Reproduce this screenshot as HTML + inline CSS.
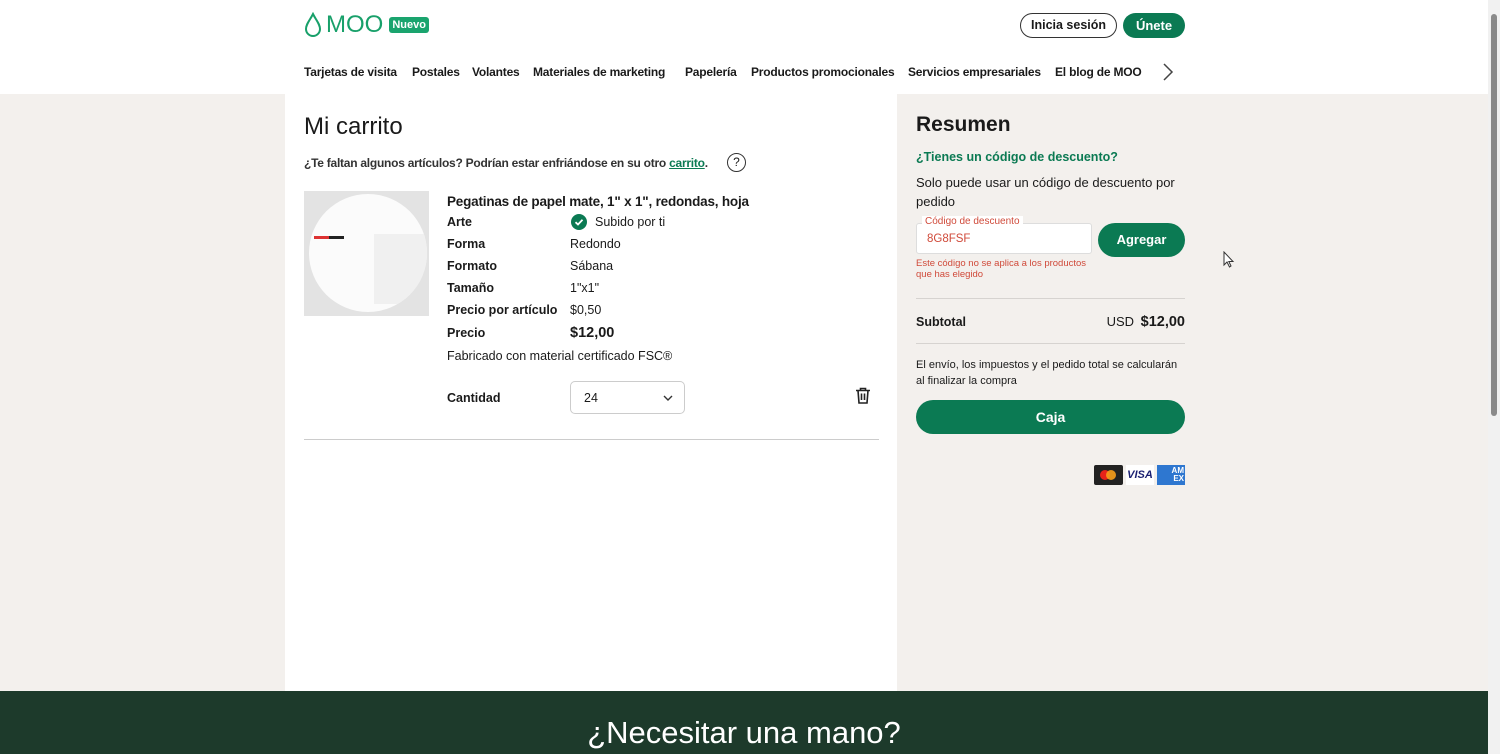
<!DOCTYPE html>
<html><head><meta charset="utf-8"><style>
*{box-sizing:border-box;margin:0;padding:0}
body{width:1500px;height:754px;overflow:hidden;font-family:"Liberation Sans",sans-serif;color:#1a1a1a;background:#f3f0ed;position:relative}
.hdr{position:absolute;left:0;top:0;width:1488px;height:94px;background:#fff}
.logo{position:absolute;left:304px;top:11px;display:flex;align-items:center}
.moo{color:#18a06a;font-size:24px;margin-left:4px}
.badge{background:#1aa46e;color:#fff;font-size:11px;font-weight:bold;padding:2px 3px;border-radius:3px;margin-left:6px}
.btn1{position:absolute;left:1020px;top:13px;width:97px;height:25px;border:1px solid #333;border-radius:13px;font-size:12.5px;font-weight:bold;text-align:center;line-height:23px}
.btn2{position:absolute;left:1123px;top:13px;width:62px;height:25px;background:#0b7a53;color:#fff;border-radius:13px;font-size:13px;font-weight:bold;text-align:center;line-height:25px}
.nav span{position:absolute;top:65px;font-size:12px;font-weight:bold;white-space:nowrap;letter-spacing:-0.2px}
.main{position:absolute;left:285px;top:94px;width:612px;height:597px;background:#fff}
.side{position:absolute;left:897px;top:94px;width:591px;height:597px;background:#f3f0ed}
.sb{position:absolute;left:1488px;top:0;width:12px;height:754px;background:#f1f1f1}
.sb div{position:absolute;left:3px;top:14px;width:6px;height:402px;background:#8a8a8a;border-radius:3px}
.foot{position:absolute;left:0;top:691px;width:1488px;height:63px;background:#1d3a2b;color:#fff;font-size:31px;text-align:center;padding-top:24px}
h1{font-size:24px;font-weight:normal;position:absolute}
.t{position:absolute;font-size:12.5px;white-space:nowrap}
.b{font-weight:bold}
.g{color:#0b7a53}
.lbl{left:447px;font-weight:bold}
.val{left:570px}
</style></head><body>
<div class="hdr">
 <div class="logo"><svg width="18" height="26" viewBox="0 0 18 26"><path d="M9 2 C6 8 2 12 2 17 A7 7 0 0 0 16 17 C16 12 12 8 9 2Z" fill="none" stroke="#18a06a" stroke-width="2"/></svg><span class="moo">MOO</span><span class="badge">Nuevo</span></div>
 <div class="btn1">Inicia sesión</div><div class="btn2">Únete</div>
 <div class="nav"><span style="left:304px">Tarjetas de visita</span><span style="left:412px">Postales</span><span style="left:472px">Volantes</span><span style="left:533px">Materiales de marketing</span><span style="left:685px">Papelería</span><span style="left:751px">Productos promocionales</span><span style="left:908px">Servicios empresariales</span><span style="left:1055px">El blog de MOO</span></div>
 <svg style="position:absolute;left:1162px;top:63px" width="12" height="18" viewBox="0 0 12 18"><path d="M2 1 L10 9 L2 17" fill="none" stroke="#444" stroke-width="1.5"/></svg>
</div>
<div class="main"></div><div class="side"></div>
<h1 style="left:304px;top:113px">Mi carrito</h1>
<div class="t b" style="left:304px;top:156px;color:#333;font-size:12px;letter-spacing:-0.25px">¿Te faltan algunos artículos? Podrían estar enfriándose en su otro <span class="g" style="text-decoration:underline">carrito</span>.</div>
<div style="position:absolute;left:727px;top:153px;width:19px;height:19px;border:1.5px solid #333;border-radius:50%;font-size:12px;text-align:center;line-height:16px">?</div>
<div style="position:absolute;left:304px;top:191px;width:125px;height:125px;background:#e3e3e3"><div style="position:absolute;left:5px;top:3px;width:118px;height:118px;border-radius:50%;background:#fbfbfb;overflow:hidden"><div style="position:absolute;left:5px;top:42px;width:15px;height:3px;background:#d33"></div><div style="position:absolute;left:20px;top:42px;width:15px;height:3px;background:#222"></div><div style="position:absolute;left:65px;top:40px;width:60px;height:70px;background:#f0f0f0"></div></div></div>
<div class="t b" style="left:447px;top:194px;font-size:13.5px;letter-spacing:-0.2px">Pegatinas de papel mate, 1" x 1", redondas, hoja</div>
<div class="t lbl" style="top:215px">Arte</div>
<svg style="position:absolute;left:571px;top:214px" width="16" height="16"><circle cx="8" cy="8" r="8" fill="#0b7a53"/><path d="M4.5 8.2 L7 10.5 L11.5 5.8" stroke="#fff" stroke-width="1.8" fill="none"/></svg>
<div class="t" style="left:595px;top:215px">Subido por ti</div>
<div class="t lbl" style="top:237px">Forma</div><div class="t val" style="top:237px">Redondo</div>
<div class="t lbl" style="top:259px">Formato</div><div class="t val" style="top:259px">Sábana</div>
<div class="t lbl" style="top:281px">Tamaño</div><div class="t val" style="top:281px">1"x1"</div>
<div class="t lbl" style="top:303px">Precio por artículo</div><div class="t val" style="top:303px">$0,50</div>
<div class="t lbl" style="top:326px">Precio</div><div class="t val b" style="top:325px;font-size:14.5px">$12,00</div>
<div class="t" style="left:447px;top:349px">Fabricado con material certificado FSC®</div>
<div class="t lbl" style="top:391px">Cantidad</div>
<div style="position:absolute;left:570px;top:381px;width:115px;height:33px;border:1px solid #ccc;border-radius:5px;font-size:12.5px;padding:9px 0 0 13px">24<svg style="position:absolute;left:92px;top:12px" width="10" height="8"><path d="M1 2 L5 6 L9 2" stroke="#333" stroke-width="1.4" fill="none"/></svg></div>
<svg style="position:absolute;left:855px;top:387px" width="16" height="17" viewBox="0 0 16 17"><path d="M1 3.5 H15 M5.5 3.5 V1.5 H10.5 V3.5 M3 3.5 L4 16 H12 L13 3.5 M6.5 6.5 V13 M9.5 6.5 V13" stroke="#222" stroke-width="1.6" fill="none"/></svg>
<div style="position:absolute;left:304px;top:439px;width:575px;height:1px;background:#ccc"></div>

<h1 style="left:916px;top:113px;font-weight:bold;font-size:21px">Resumen</h1>
<div class="t b g" style="left:916px;top:150px">¿Tienes un código de descuento?</div>
<div class="t" style="left:916px;top:173px;font-size:13px;line-height:19px;white-space:normal;width:280px">Solo puede usar un código de descuento por pedido</div>
<div style="position:absolute;left:916px;top:223px;width:176px;height:31px;background:#fff;border:1px solid #ddd;border-radius:3px;color:#d04a3a;font-size:11.5px;padding:9px 0 0 10px">8G8FSF</div>
<div class="t" style="left:922px;top:216px;font-size:10px;color:#d04a3a;background:#fff;padding:0 3px">Código de descuento</div>
<div style="position:absolute;left:1098px;top:223px;width:87px;height:34px;background:#0b7a53;color:#fff;border-radius:17px;font-weight:bold;font-size:13px;text-align:center;line-height:34px">Agregar</div>
<div class="t" style="left:916px;top:258px;font-size:9.5px;color:#d04a3a;line-height:11px">Este código no se aplica a los productos<br>que has elegido</div>
<div style="position:absolute;left:916px;top:298px;width:269px;height:1px;background:#d6d3d0"></div>
<div class="t b" style="left:916px;top:315px">Subtotal</div>
<div class="t" style="right:315px;top:314px;font-size:13px">USD <b style="font-size:14.5px;margin-left:3px">$12,00</b></div>
<div style="position:absolute;left:916px;top:343px;width:269px;height:1px;background:#d6d3d0"></div>
<div class="t" style="left:916px;top:357px;font-size:11px;line-height:16px">El envío, los impuestos y el pedido total se calcularán<br>al finalizar la compra</div>
<div style="position:absolute;left:916px;top:400px;width:269px;height:34px;background:#0b7a53;color:#fff;border-radius:17px;font-weight:bold;font-size:14px;text-align:center;line-height:34px">Caja</div>
<div style="position:absolute;left:1094px;top:465px;width:29px;height:20px;background:#222;border-radius:2px"><div style="position:absolute;left:6px;top:5px;width:10px;height:10px;border-radius:50%;background:#e8231a"></div><div style="position:absolute;left:12px;top:5px;width:10px;height:10px;border-radius:50%;background:#f79e1b;opacity:.9"></div></div>
<div style="position:absolute;left:1126px;top:465px;width:28px;height:20px;background:#fff;color:#1a1f71;font-weight:bold;font-style:italic;font-size:11px;text-align:center;line-height:20px">VISA</div>
<div style="position:absolute;left:1157px;top:465px;width:28px;height:20px;background:#2e77d0;color:#fff;font-weight:bold;font-size:8px;text-align:right;line-height:8px;padding:2px 1px 0 0">AM<br>EX</div>
<svg style="position:absolute;left:1223px;top:251px" width="12" height="18"><path d="M1 1 L1 14 L4 11 L6.5 16 L8 15 L5.8 10.5 L10 10.5 Z" fill="#fff" stroke="#333" stroke-width="1"/></svg>
<div class="foot">¿Necesitar una mano?</div>
<div class="sb"><div></div></div>
</body></html>
